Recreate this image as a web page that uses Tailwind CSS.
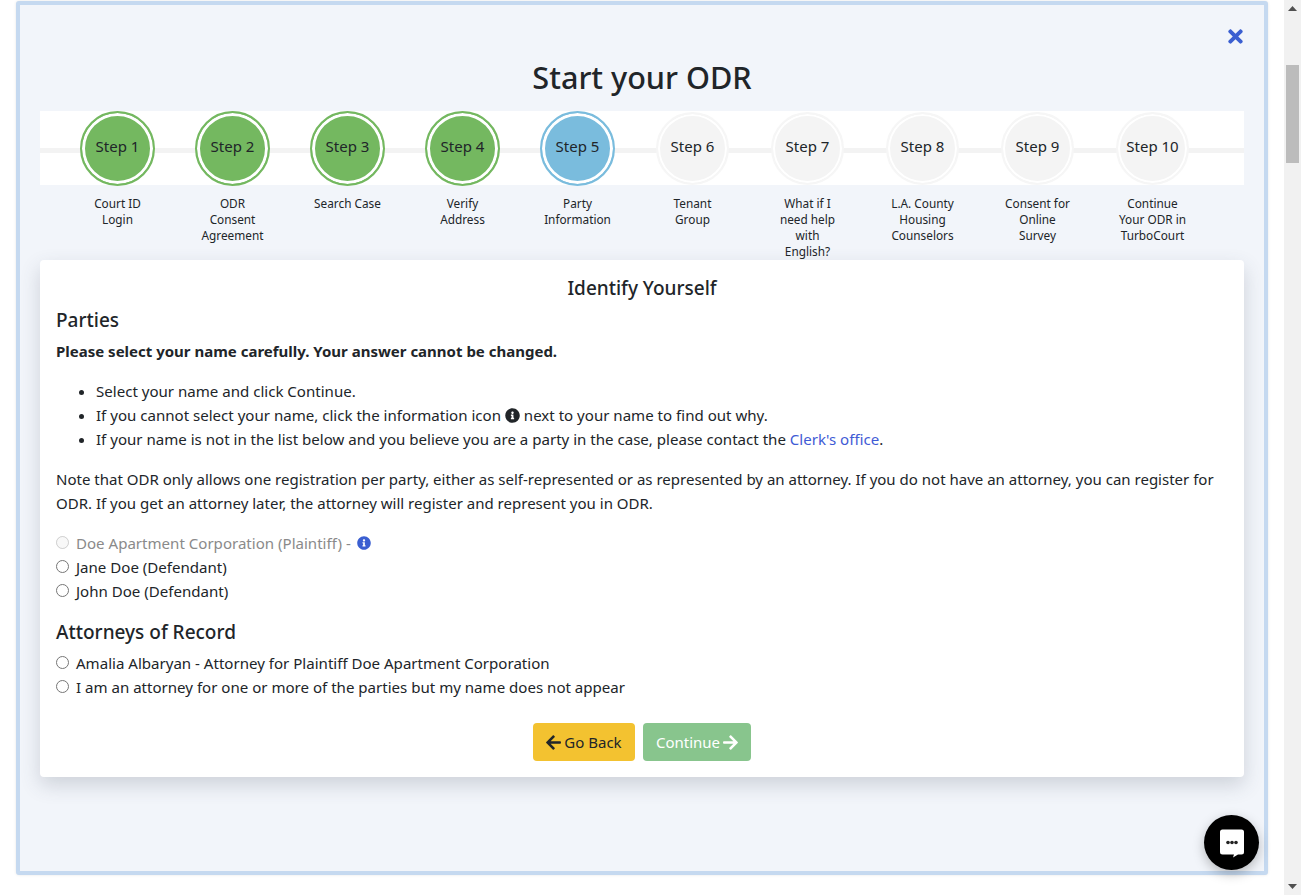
<!DOCTYPE html>
<html lang="en">
<head>
<meta charset="utf-8">
<title>Start your ODR</title>
<script src="https://cdn.jsdelivr.net/npm/@tailwindcss/browser@4"></script>
</head>
<body class="bg-white">
<div class="flex w-[1301px] h-[895px] overflow-hidden font-['Noto_Sans','Open_Sans',sans-serif] text-[#212529] text-[15px] leading-6">
  <div class="relative w-[1284px] pl-4 pr-4 pt-px">
    <div class="relative w-[1252px] h-[874px] border-4 border-[#c5d9f0] rounded-[3px] bg-[#f2f5fa] px-5 shadow-[0_0_3px_rgba(0,0,0,0.1)]">
      <svg class="absolute left-[1208px] top-[21px] w-[15px] h-[21px] fill-[#3b5fd1]" viewBox="0 0 352 512"><path d="M242.72 256l100.07-100.07c12.28-12.28 12.28-32.19 0-44.48l-22.24-22.24c-12.28-12.28-32.19-12.28-44.48 0L176 189.28 75.93 89.21c-12.28-12.28-32.19-12.28-44.48 0L9.21 111.45c-12.28 12.28-12.28 32.19 0 44.48L109.28 256 9.21 356.07c-12.28 12.28-12.28 32.19 0 44.48l22.24 22.24c12.28 12.28 32.2 12.28 44.48 0L176 322.72l100.07 100.07c12.28 12.28 32.2 12.28 44.48 0l22.24-22.24c12.28-12.28 12.28-32.19 0-44.48L242.72 256z"/></svg>

      <h1 class="pt-[50px] h-[106px] text-center text-[30.6px] leading-[44px] font-medium">Start your ODR</h1>

      <div class="relative h-[74px] bg-white">
        <div class="absolute left-0 right-0 top-[37px] h-[5px] bg-[#f3f3f3]"></div>
        <div class="relative flex pl-[20px] h-[74px] items-center">
          <div class="w-[115px] flex justify-center"><div class="shrink-0 w-[75px] h-[75px] rounded-full border-2 border-[#74b860] bg-[#74b860] shadow-[inset_0_0_0_3px_white] flex items-center justify-center text-[15px] pb-[4px]">Step 1</div></div>
          <div class="w-[115px] flex justify-center"><div class="shrink-0 w-[75px] h-[75px] rounded-full border-2 border-[#74b860] bg-[#74b860] shadow-[inset_0_0_0_3px_white] flex items-center justify-center text-[15px] pb-[4px]">Step 2</div></div>
          <div class="w-[115px] flex justify-center"><div class="shrink-0 w-[75px] h-[75px] rounded-full border-2 border-[#74b860] bg-[#74b860] shadow-[inset_0_0_0_3px_white] flex items-center justify-center text-[15px] pb-[4px]">Step 3</div></div>
          <div class="w-[115px] flex justify-center"><div class="shrink-0 w-[75px] h-[75px] rounded-full border-2 border-[#74b860] bg-[#74b860] shadow-[inset_0_0_0_3px_white] flex items-center justify-center text-[15px] pb-[4px]">Step 4</div></div>
          <div class="w-[115px] flex justify-center"><div class="shrink-0 w-[75px] h-[75px] rounded-full border-2 border-[#7abcdd] bg-[#7abcdd] shadow-[inset_0_0_0_3px_white] flex items-center justify-center text-[15px] pb-[4px]">Step 5</div></div>
          <div class="w-[115px] flex justify-center"><div class="shrink-0 w-[73px] h-[73px] rounded-full border-2 border-[#f6f6f6] bg-[#f4f4f4] shadow-[inset_0_0_0_2px_white] flex items-center justify-center text-[15px] pb-[5px]">Step 6</div></div>
          <div class="w-[115px] flex justify-center"><div class="shrink-0 w-[73px] h-[73px] rounded-full border-2 border-[#f6f6f6] bg-[#f4f4f4] shadow-[inset_0_0_0_2px_white] flex items-center justify-center text-[15px] pb-[5px]">Step 7</div></div>
          <div class="w-[115px] flex justify-center"><div class="shrink-0 w-[73px] h-[73px] rounded-full border-2 border-[#f6f6f6] bg-[#f4f4f4] shadow-[inset_0_0_0_2px_white] flex items-center justify-center text-[15px] pb-[5px]">Step 8</div></div>
          <div class="w-[115px] flex justify-center"><div class="shrink-0 w-[73px] h-[73px] rounded-full border-2 border-[#f6f6f6] bg-[#f4f4f4] shadow-[inset_0_0_0_2px_white] flex items-center justify-center text-[15px] pb-[5px]">Step 9</div></div>
          <div class="w-[115px] flex justify-center"><div class="shrink-0 w-[73px] h-[73px] rounded-full border-2 border-[#f6f6f6] bg-[#f4f4f4] shadow-[inset_0_0_0_2px_white] flex items-center justify-center text-[15px] pb-[5px]">Step 10</div></div>
        </div>
      </div>

      <div class="flex pl-[20px] h-[75px] pt-[10px] text-[11.8px] leading-4 text-center">
        <div class="w-[115px]">Court ID<br>Login</div>
        <div class="w-[115px]">ODR<br>Consent<br>Agreement</div>
        <div class="w-[115px]">Search Case</div>
        <div class="w-[115px]">Verify<br>Address</div>
        <div class="w-[115px]">Party<br>Information</div>
        <div class="w-[115px]">Tenant<br>Group</div>
        <div class="w-[115px]">What if I<br>need help<br>with<br>English?</div>
        <div class="w-[115px]">L.A. County<br>Housing<br>Counselors</div>
        <div class="w-[115px]">Consent for<br>Online<br>Survey</div>
        <div class="w-[115px]">Continue<br>Your ODR in<br>TurboCourt</div>
      </div>

      <div class="h-[517px] bg-white rounded-[4px] shadow-[0_8px_20px_rgba(60,70,90,0.2)] px-4 pt-4">
        <h2 class="text-center text-[19px] leading-6 font-medium">Identify Yourself</h2>
        <h3 class="mt-2 text-[19px] leading-6 font-medium">Parties</h3>
        <p class="mt-[7px] font-bold text-[15px]">Please select your name carefully. Your answer cannot be changed.</p>
        <ul class="mt-4 pl-10 list-disc text-[15.07px]">
          <li>Select your name and click Continue.</li>
          <li>If you cannot select your name, click the information icon <svg class="inline-block w-[15px] h-[15px] align-[-2px] fill-[#212529]" viewBox="0 0 512 512"><path d="M256 8C119.043 8 8 119.083 8 256c0 136.997 111.043 248 248 248s248-111.003 248-248C504 119.083 392.957 8 256 8zm0 110c23.196 0 42 18.804 42 42s-18.804 42-42 42-42-18.804-42-42 18.804-42 42-42zm56 254c0 6.627-5.373 12-12 12h-88c-6.627 0-12-5.373-12-12v-24c0-6.627 5.373-12 12-12h12v-64h-12c-6.627 0-12-5.373-12-12v-24c0-6.627 5.373-12 12-12h64c6.627 0 12 5.373 12 12v100h12c6.627 0 12 5.373 12 12v24z"/></svg> next to your name to find out why.</li>
          <li>If your name is not in the list below and you believe you are a party in the case, please contact the <span class="text-[#3f5bd5]">Clerk's office</span>.</li>
        </ul>
        <p class="mt-4 text-[15.03px]">Note that ODR only allows one registration per party, either as self-represented or as represented by an attorney. If you do not have an attorney, you can register for ODR. If you get an attorney later, the attorney will register and represent you in ODR.</p>
        <div class="mt-4 text-[15.07px]">
          <label class="flex items-center gap-[7px] text-[#8a8a8a]"><input type="radio" disabled class="m-0 mb-[2px]"><span>Doe Apartment Corporation (Plaintiff) -</span><svg class="-ml-[1px] w-[14px] h-[14px] fill-[#3b5fd1]" viewBox="0 0 512 512"><path d="M256 8C119.043 8 8 119.083 8 256c0 136.997 111.043 248 248 248s248-111.003 248-248C504 119.083 392.957 8 256 8zm0 110c23.196 0 42 18.804 42 42s-18.804 42-42 42-42-18.804-42-42 18.804-42 42-42zm56 254c0 6.627-5.373 12-12 12h-88c-6.627 0-12-5.373-12-12v-24c0-6.627 5.373-12 12-12h12v-64h-12c-6.627 0-12-5.373-12-12v-24c0-6.627 5.373-12 12-12h64c6.627 0 12 5.373 12 12v100h12c6.627 0 12 5.373 12 12v24z"/></svg></label>
          <label class="flex items-center gap-[7px]"><input type="radio" class="m-0 mb-[2px]"><span>Jane Doe (Defendant)</span></label>
          <label class="flex items-center gap-[7px]"><input type="radio" class="m-0 mb-[2px]"><span>John Doe (Defendant)</span></label>
        </div>
        <h3 class="mt-[17px] text-[19px] leading-6 font-medium">Attorneys of Record</h3>
        <div class="mt-[7px] text-[15.07px]">
          <label class="flex items-center gap-[7px]"><input type="radio" class="m-0 mb-[2px]"><span>Amalia Albaryan - Attorney for Plaintiff Doe Apartment Corporation</span></label>
          <label class="flex items-center gap-[7px]"><input type="radio" class="m-0 mb-[2px]"><span>I am an attorney for one or more of the parties but my name does not appear</span></label>
        </div>
        <div class="mt-6 flex justify-center gap-2 text-[15px]">
          <button class="w-[102px] h-[38px] rounded-[4px] bg-[#f3c230] flex items-center justify-center gap-[3px]"><svg class="w-[15px] h-[17px] fill-[#212529]" viewBox="0 0 448 512"><path d="M257.5 445.1l-22.2 22.2c-9.4 9.4-24.6 9.4-33.9 0L7 273c-9.4-9.4-9.4-24.6 0-33.9L201.4 44.7c9.4-9.4 24.6-9.4 33.9 0l22.2 22.2c9.5 9.5 9.3 25-.4 34.3L136.6 216H424c13.3 0 24 10.7 24 24v32c0 13.3-10.7 24-24 24H136.6l120.5 114.8c9.8 9.3 10 24.8.4 34.3z"/></svg>Go Back</button>
          <button class="w-[108px] h-[38px] rounded-[4px] bg-[#88c58d] text-white flex items-center justify-center gap-[3px]">Continue<svg class="w-[15px] h-[17px] fill-white" viewBox="0 0 448 512"><path d="M190.5 66.9l22.2-22.2c9.4-9.4 24.6-9.4 33.9 0L441 239c9.4 9.4 9.4 24.6 0 33.9L246.6 467.3c-9.4 9.4-24.6 9.4-33.9 0l-22.2-22.2c-9.5-9.5-9.3-25 .4-34.3L311.4 296H24c-13.3 0-24-10.7-24-24v-32c0-13.3 10.7-24 24-24h287.4L190.9 101.2c-9.8-9.3-10-24.8-.4-34.3z"/></svg></button>
        </div>
      </div>
    </div>

    <div class="absolute left-[1204px] top-[815px] w-[55px] h-[55px] rounded-full bg-black shadow-[0_4px_12px_rgba(0,0,0,0.25)] flex items-center justify-center">
      <svg class="w-[26px] h-[30px]" viewBox="0 0 26 30"><path fill="white" d="M3.5 1.5h19a2.5 2.5 0 0 1 2.500 2.500v20a2.500 2.500 0 0 1-2.500 2.500h-3.500l-5 3 1-3H3.500a2.500 2.500 0 0 1-2.500-2.500V4a2.500 2.500 0 0 1 2.500-2.500z"/><circle cx="9" cy="14.500" r="1.800" fill="#222"/><circle cx="13" cy="14.500" r="1.800" fill="#222"/><circle cx="17" cy="14.500" r="1.800" fill="#222"/></svg>
    </div>
  </div>

  <div class="w-[17px] h-full bg-[#f1f1f1] flex flex-col items-center relative">
    <svg class="mt-[6px] w-[9px] h-[5px] fill-[#505050]" viewBox="0 0 9 5"><path d="M4.500 0L9 5H0z"/></svg>
    <div class="absolute top-[65px] left-[2px] w-[13px] h-[98px] bg-[#bcbcbc]"></div>
    <svg class="mt-auto mb-[6px] w-[9px] h-[5px] fill-[#505050]" viewBox="0 0 9 5"><path d="M4.500 5L9 0H0z"/></svg>
  </div>
</div>
</body>
</html>
